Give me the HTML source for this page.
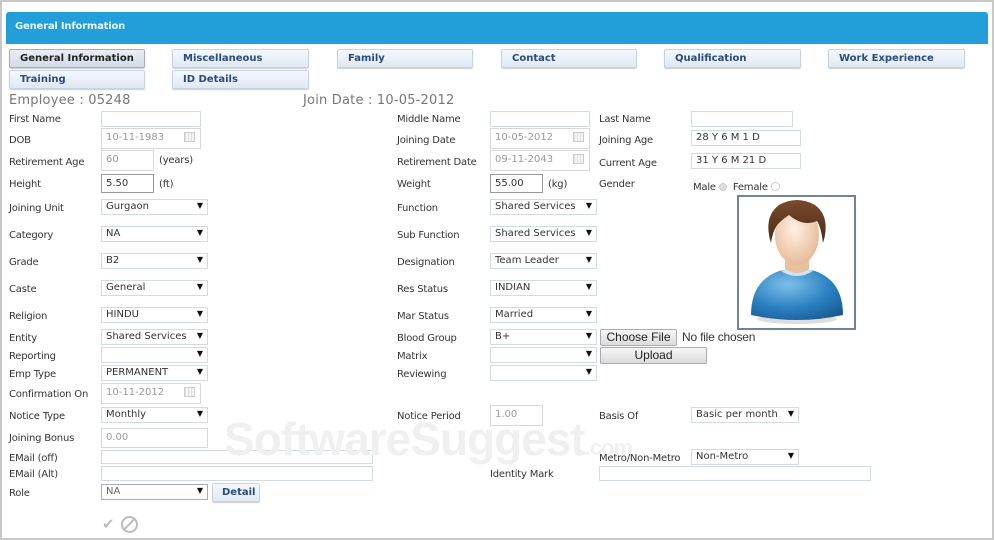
<!DOCTYPE html>
<html><head><meta charset="utf-8">
<style>
*{box-sizing:border-box;margin:0;padding:0}
body{width:994px;height:540px;background:#fff;position:relative;overflow:hidden;font-family:"DejaVu Sans","Liberation Sans",sans-serif;font-size:10px;color:#333}
.frame{position:absolute;left:0;top:0;width:994px;height:540px;border:2px solid #c8c8c8;border-top-width:2px}
.hdr{position:absolute;left:6px;top:12px;width:982px;height:32px;background:#229fd8;border-radius:3px 3px 0 0;color:#e8f6ff;font-weight:bold;font-size:10px;padding:9px 0 0 9px;letter-spacing:-0.2px}
.tab{position:absolute;height:19px;border:1px solid #c5d3e2;border-radius:2px;background:linear-gradient(#f4f8fd,#dfe8f3);color:#2b4a7d;font-weight:bold;font-size:10px;padding:3px 0 0 10px;box-shadow:0 1px 1px #ccc}
.tab.a{background:linear-gradient(#e9eef5,#d3dbe6);color:#222;border-color:#aab}
.l{position:absolute;font-size:10px;color:#333;white-space:nowrap;letter-spacing:-0.2px;margin-top:2px}
.i{position:absolute;height:16px;border:1px solid #cfdbe6;background:#fff;font-size:10px;padding:1px 4px;color:#333;white-space:nowrap}
.i.g{color:#999;border-color:#d8d8d8}
.i.b{border:1px solid #999;height:19px;padding-top:3px}
.s{position:absolute;height:16px;border:1px solid #cfdbe6;background:#fff;font-size:10px;padding:1px 4px;color:#333;white-space:nowrap}
.s:after{content:"▼";position:absolute;right:4px;top:1px;font-size:8px;color:#111}
.cal{position:absolute;right:5px;top:3px;width:11px;height:10px;border:1px solid #ccc;background:repeating-linear-gradient(90deg,#ddd 0 1px,#f5f5f5 1px 3px)}
.btn{position:absolute;border:1px solid #aaa;border-radius:2px;background:linear-gradient(#f6f6f6,#dcdcdc);font-family:"Liberation Sans",sans-serif;font-size:12px;text-align:center;color:#222}
.big{position:absolute;font-size:13px;color:#777;letter-spacing:0.2px}
</style></head><body>
<div class="frame"></div>
<div class="hdr">General Information</div>

<div class="tab a" style="left:9px;top:49px;width:136px">General Information</div>
<div class="tab" style="left:172px;top:49px;width:137px">Miscellaneous</div>
<div class="tab" style="left:337px;top:49px;width:136px">Family</div>
<div class="tab" style="left:501px;top:49px;width:136px">Contact</div>
<div class="tab" style="left:664px;top:49px;width:137px">Qualification</div>
<div class="tab" style="left:828px;top:49px;width:137px">Work Experience</div>
<div class="tab" style="left:9px;top:70px;width:136px">Training</div>
<div class="tab" style="left:172px;top:70px;width:137px">ID Details</div>

<div class="big" style="left:9px;top:93px">Employee : 05248</div>
<div class="big" style="left:303px;top:93px">Join Date : 10-05-2012</div>

<div class="l" style="left:9px;top:112px">First Name</div>
<div class="l" style="left:9px;top:133px">DOB</div>
<div class="l" style="left:9px;top:155px">Retirement Age</div>
<div class="l" style="left:9px;top:177px">Height</div>
<div class="l" style="left:9px;top:201px">Joining Unit</div>
<div class="l" style="left:9px;top:228px">Category</div>
<div class="l" style="left:9px;top:255px">Grade</div>
<div class="l" style="left:9px;top:282px">Caste</div>
<div class="l" style="left:9px;top:309px">Religion</div>
<div class="l" style="left:9px;top:331px">Entity</div>
<div class="l" style="left:9px;top:349px">Reporting</div>
<div class="l" style="left:9px;top:367px">Emp Type</div>
<div class="l" style="left:9px;top:387px">Confirmation On</div>
<div class="l" style="left:9px;top:409px">Notice Type</div>
<div class="l" style="left:9px;top:431px">Joining Bonus</div>
<div class="l" style="left:9px;top:451px">EMail (off)</div>
<div class="l" style="left:9px;top:467px">EMail (Alt)</div>
<div class="l" style="left:9px;top:486px">Role</div>

<div class="i" style="left:101px;top:111px;width:100px"></div>
<div class="i g" style="left:101px;top:128px;width:100px;height:21px;padding-top:3px">10-11-1983<span class="cal"></span></div>
<div class="i g" style="left:101px;top:150px;width:53px;height:21px;padding-top:3px">60</div>
<div class="l" style="left:159px;top:153px">(years)</div>
<div class="i b" style="left:101px;top:174px;width:53px">5.50</div>
<div class="l" style="left:159px;top:177px">(ft)</div>
<div class="s" style="left:101px;top:199px;width:107px">Gurgaon</div>
<div class="s" style="left:101px;top:226px;width:107px">NA</div>
<div class="s" style="left:101px;top:253px;width:107px">B2</div>
<div class="s" style="left:101px;top:280px;width:107px">General</div>
<div class="s" style="left:101px;top:307px;width:107px">HINDU</div>
<div class="s" style="left:101px;top:329px;width:107px">Shared Services</div>
<div class="s" style="left:101px;top:347px;width:107px"></div>
<div class="s" style="left:101px;top:365px;width:107px">PERMANENT</div>
<div class="i g" style="left:101px;top:383px;width:100px;height:21px;padding-top:3px">10-11-2012<span class="cal"></span></div>
<div class="s" style="left:101px;top:407px;width:107px">Monthly</div>
<div class="i g" style="left:101px;top:428px;width:107px;height:20px;padding-top:3px">0.00</div>
<div class="i" style="left:101px;top:450px;width:272px;height:14px"></div>
<div class="i" style="left:101px;top:466px;width:272px;height:15px"></div>
<div class="s" style="left:101px;top:484px;width:107px;border-color:#aaa;color:#666">NA</div>
<div class="tab" style="left:212px;top:483px;width:48px;height:19px;padding-left:9px">Detail</div>

<div style="position:absolute;left:224px;top:412px;font-family:'Liberation Sans',sans-serif;font-weight:bold;font-size:46px;color:#f0f0f0;letter-spacing:-1px">SoftwareSuggest<span style="font-size:22px">.com</span></div>

<div class="l" style="left:397px;top:112px">Middle Name</div>
<div class="l" style="left:397px;top:133px">Joining Date</div>
<div class="l" style="left:397px;top:155px">Retirement Date</div>
<div class="l" style="left:397px;top:177px">Weight</div>
<div class="l" style="left:397px;top:201px">Function</div>
<div class="l" style="left:397px;top:228px">Sub Function</div>
<div class="l" style="left:397px;top:255px">Designation</div>
<div class="l" style="left:397px;top:282px">Res Status</div>
<div class="l" style="left:397px;top:309px">Mar Status</div>
<div class="l" style="left:397px;top:331px">Blood Group</div>
<div class="l" style="left:397px;top:349px">Matrix</div>
<div class="l" style="left:397px;top:367px">Reviewing</div>
<div class="l" style="left:397px;top:409px">Notice Period</div>
<div class="l" style="left:490px;top:467px">Identity Mark</div>

<div class="i" style="left:490px;top:111px;width:100px"></div>
<div class="i g" style="left:490px;top:128px;width:100px;height:21px;padding-top:3px">10-05-2012<span class="cal"></span></div>
<div class="i g" style="left:490px;top:150px;width:100px;height:21px;padding-top:3px">09-11-2043<span class="cal"></span></div>
<div class="i b" style="left:490px;top:174px;width:53px">55.00</div>
<div class="l" style="left:548px;top:177px">(kg)</div>
<div class="s" style="left:490px;top:199px;width:107px">Shared Services</div>
<div class="s" style="left:490px;top:226px;width:107px">Shared Services</div>
<div class="s" style="left:490px;top:253px;width:107px">Team Leader</div>
<div class="s" style="left:490px;top:280px;width:107px">INDIAN</div>
<div class="s" style="left:490px;top:307px;width:107px">Married</div>
<div class="s" style="left:490px;top:329px;width:107px">B+</div>
<div class="s" style="left:490px;top:347px;width:107px"></div>
<div class="s" style="left:490px;top:365px;width:107px"></div>
<div class="i g" style="left:490px;top:405px;width:53px;height:21px;padding-top:3px">1.00</div>

<div class="l" style="left:599px;top:112px">Last Name</div>
<div class="l" style="left:599px;top:133px">Joining Age</div>
<div class="l" style="left:599px;top:156px">Current Age</div>
<div class="l" style="left:599px;top:177px">Gender</div>
<div class="l" style="left:599px;top:409px">Basis Of</div>
<div class="l" style="left:599px;top:451px">Metro/Non-Metro</div>

<div class="i" style="left:691px;top:111px;width:102px"></div>
<div class="i" style="left:691px;top:130px;width:110px">28 Y 6 M 1 D</div>
<div class="i" style="left:691px;top:153px;width:110px">31 Y 6 M 21 D</div>
<div class="l" style="left:693px;top:180px">Male <span style="display:inline-block;width:8px;height:8px;border-radius:50%;border:1px solid #ccc;background:#ddd;vertical-align:-1px"></span>&nbsp; Female <span style="display:inline-block;width:9px;height:9px;border-radius:50%;border:1px solid #ccc;background:#fff;vertical-align:-1px"></span></div>
<div class="s" style="left:691px;top:407px;width:108px">Basic per month</div>
<div class="s" style="left:691px;top:449px;width:108px">Non-Metro</div>
<div class="i" style="left:599px;top:466px;width:272px;height:15px"></div>

<div class="btn" style="left:600px;top:329px;width:77px;height:17px;line-height:15px">Choose File</div>
<div class="l" style="left:682px;top:328px;font-family:'Liberation Sans',sans-serif;font-size:12px">No file chosen</div>
<div class="btn" style="left:600px;top:347px;width:107px;height:17px;line-height:15px">Upload</div>

<div style="position:absolute;left:737px;top:195px;width:119px;height:135px;border:2px solid #6f8495;background:#fff;overflow:hidden">
<svg width="115" height="131" viewBox="0 0 115 131">
<defs>
<radialGradient id="sh" cx="0.4" cy="0.3" r="0.8"><stop offset="0" stop-color="#7cc0ea"/><stop offset="0.6" stop-color="#2a7fc0"/><stop offset="1" stop-color="#1a5a92"/></radialGradient>
<radialGradient id="fc" cx="0.45" cy="0.4" r="0.7"><stop offset="0" stop-color="#fff1e4"/><stop offset="1" stop-color="#e3b38e"/></radialGradient>
<linearGradient id="hr" x1="0" y1="0" x2="0" y2="1"><stop offset="0" stop-color="#7a4a2c"/><stop offset="1" stop-color="#4a2a18"/></linearGradient>
</defs>
<ellipse cx="58" cy="122" rx="40" ry="5" fill="#ddd"/>
<path d="M12 118 Q12 84 40 74 Q58 70 76 74 Q104 84 104 118 Q58 128 12 118Z" fill="url(#sh)"/>
<path d="M42 74 Q58 84 74 74 Q58 70 42 74Z" fill="#cfe6f2"/>
<path d="M46 56 L46 72 Q58 80 70 72 L70 56Z" fill="#e8c09e"/>
<ellipse cx="58" cy="38" rx="22" ry="30" fill="url(#fc)"/>
<path d="M32 46 Q24 20 40 8 Q58 -2 76 8 Q92 20 84 46 Q82 30 78 24 Q64 30 50 18 Q44 22 40 26 Q34 32 32 46Z" fill="url(#hr)"/>
</svg>
</div>

<div style="position:absolute;left:102px;top:515px;font-size:15px;color:#bbb;font-family:'DejaVu Sans',sans-serif">✔</div>
<div style="position:absolute;left:121px;top:516px;width:17px;height:17px;border:2px solid #bbb;border-radius:50%"><div style="position:absolute;left:5px;top:-1px;width:2px;height:15px;background:#bbb;transform:rotate(45deg)"></div></div>
</body></html>
